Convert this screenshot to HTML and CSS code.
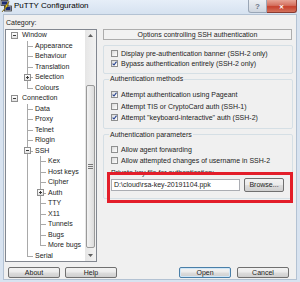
FILE: index.html
```html
<!DOCTYPE html>
<html>
<head>
<meta charset="utf-8">
<link rel="stylesheet" href="styles.css">
</head>
<body>
<div class="win">
  <div class="titlebar">
    <svg class="appicon" width="13" height="13" viewBox="0 0 13 13">
      <rect x="1" y="0.5" width="7" height="5" fill="#c4c4c4" stroke="#3a3a3a" stroke-width=".8"/>
      <rect x="2" y="1.4" width="5" height="3.2" fill="#1c2c74"/>
      <rect x="4.5" y="6" width="7" height="5" fill="#c4c4c4" stroke="#3a3a3a" stroke-width=".8"/>
      <rect x="5.5" y="6.9" width="5" height="3.2" fill="#1c2c74"/>
      <path d="M2 12 L6 6.5 L4.8 6.5 L9 1.5 L7.2 5.6 L8.4 5.6 Z" fill="#f3d31a" stroke="#6d5300" stroke-width=".5"/>
    </svg>
    <span class="title">PuTTY Configuration</span>
    <div class="caps">
      <div class="cap help">?</div>
      <div class="cap close">✕</div>
    </div>
  </div>
  <div class="client">
    <div class="main">
      <div class="left">
        <div class="cat">Category:</div>
        <div class="tree">
          <div class="items">
            <div class="row"><i class="c"><b class="exp minus"></b></i><span class="tx">Window</span></div>
            <div class="row"><i class="c"></i><i class="c t"></i><span class="tx">Appearance</span></div>
            <div class="row"><i class="c"></i><i class="c t"></i><span class="tx">Behaviour</span></div>
            <div class="row"><i class="c"></i><i class="c t"></i><span class="tx">Translation</span></div>
            <div class="row"><i class="c"></i><i class="c t"><b class="exp plus"></b></i><span class="tx">Selection</span></div>
            <div class="row"><i class="c"></i><i class="c l"></i><span class="tx">Colours</span></div>
            <div class="row"><i class="c"><b class="exp minus"></b></i><span class="tx">Connection</span></div>
            <div class="row"><i class="c"></i><i class="c t"></i><span class="tx">Data</span></div>
            <div class="row"><i class="c"></i><i class="c t"></i><span class="tx">Proxy</span></div>
            <div class="row"><i class="c"></i><i class="c t"></i><span class="tx">Telnet</span></div>
            <div class="row"><i class="c"></i><i class="c t"></i><span class="tx">Rlogin</span></div>
            <div class="row"><i class="c"></i><i class="c t"><b class="exp minus"></b></i><span class="tx">SSH</span></div>
            <div class="row"><i class="c"></i><i class="c v"></i><i class="c t"></i><span class="tx">Kex</span></div>
            <div class="row"><i class="c"></i><i class="c v"></i><i class="c t"></i><span class="tx">Host keys</span></div>
            <div class="row"><i class="c"></i><i class="c v"></i><i class="c t"></i><span class="tx">Cipher</span></div>
            <div class="row"><i class="c"></i><i class="c v"></i><i class="c t"><b class="exp plus"></b></i><span class="tx">Auth</span></div>
            <div class="row"><i class="c"></i><i class="c v"></i><i class="c t"></i><span class="tx">TTY</span></div>
            <div class="row"><i class="c"></i><i class="c v"></i><i class="c t"></i><span class="tx">X11</span></div>
            <div class="row"><i class="c"></i><i class="c v"></i><i class="c t"></i><span class="tx">Tunnels</span></div>
            <div class="row"><i class="c"></i><i class="c v"></i><i class="c t"></i><span class="tx">Bugs</span></div>
            <div class="row"><i class="c"></i><i class="c v"></i><i class="c l"></i><span class="tx">More bugs</span></div>
            <div class="row"><i class="c"></i><i class="c l"></i><span class="tx">Serial</span></div>
          </div>
          <div class="sb">
            <div class="arr"><svg width="5" height="3" viewBox="0 0 5 3"><path d="M0 3 L2.5 0 L5 3 Z" fill="#606060"/></svg></div>
            <div class="track"><div class="thumb"><div class="grip"></div></div></div>
            <div class="arr"><svg width="5" height="3" viewBox="0 0 5 3"><path d="M0 0 L2.5 3 L5 0 Z" fill="#606060"/></svg></div>
          </div>
        </div>
      </div>
      <div class="right">
        <div class="hdr">Options controlling SSH authentication</div>
        <div class="grp g1">
          <div class="chk"><span class="box"></span>Display pre-authentication banner (SSH-2 only)</div>
          <div class="chk"><span class="box"><svg width="5" height="5" viewBox="0 0 5 5"><path d="M0.6 2.6 L2 4 L4.5 0.6" fill="none" stroke="#24408e" stroke-width="1.1"/></svg></span>Bypass authentication entirely (SSH-2 only)</div>
        </div>
        <fieldset class="grp g2">
          <legend>Authentication methods</legend>
          <div class="chk tall"><span class="box"><svg width="5" height="5" viewBox="0 0 5 5"><path d="M0.6 2.6 L2 4 L4.5 0.6" fill="none" stroke="#24408e" stroke-width="1.1"/></svg></span>Attempt authentication using Pageant</div>
          <div class="chk tall"><span class="box"></span>Attempt TIS or CryptoCard auth (SSH-1)</div>
          <div class="chk tall"><span class="box"><svg width="5" height="5" viewBox="0 0 5 5"><path d="M0.6 2.6 L2 4 L4.5 0.6" fill="none" stroke="#24408e" stroke-width="1.1"/></svg></span>Attempt "keyboard-interactive" auth (SSH-2)</div>
        </fieldset>
        <fieldset class="grp g3">
          <legend>Authentication parameters</legend>
          <div class="chk tall"><span class="box"></span>Allow agent forwarding</div>
          <div class="chk tall"><span class="box"></span>Allow attempted changes of username in SSH-2</div>
          <div class="lbl">Private key file for authentication:</div>
          <div class="filerow">
            <div class="field">D:\cloud\rsa-key-20191104.ppk</div>
            <div class="btn browse">Browse...</div>
          </div>
        </fieldset>
      </div>
    </div>
    <div class="btnrow">
      <div class="btn">About</div>
      <div class="btn gap5">Help</div>
      <div class="btn def">Open</div>
      <div class="btn gap6">Cancel</div>
    </div>
  </div>
  <div class="redbox"></div>
</div>
</body>
</html>
```
FILE: styles.css
```css
html, body { margin: 0; padding: 0; }
body { background: #f0f0f0; }

.win {
  position: relative;
  width: 300px;
  height: 282px;
  overflow: hidden;
  background: #d8e3f0;
  font-family: "Liberation Sans", Arial, sans-serif;
  font-size: 7px;
  color: #1c1c1c;
  display: flex;
  flex-direction: column;
}

/* title bar */
.titlebar {
  height: 14px;
  flex: none;
  display: flex;
  align-items: flex-start;
  background: linear-gradient(#e6eef8, #d6e2f0);
}
.appicon { flex: none; margin-right: 1px; }
.title {
  font-size: 8px;
  line-height: 11px;
  color: #000;
}
.caps { margin-left: auto; margin-right: 3px; display: flex; }
.cap {
  height: 13px;
  box-sizing: border-box;
  display: flex;
  align-items: center;
  justify-content: center;
}
.help {
  width: 19px;
  border: 1px solid #9aa6b6;
  border-top: none;
  border-radius: 0 0 0 3px;
  background: linear-gradient(#eceff3, #cfd6df);
  color: #6b7788;
  font-size: 8px;
  font-weight: bold;
}
.close {
  width: 30px;
  border: 1px solid #8a3b31;
  border-top: none;
  border-left: none;
  border-radius: 0 0 3px 0;
  background: linear-gradient(#e7a496, #d4705e 45%, #c7412d 55%, #d3715b);
  color: #fff;
  font-size: 6px;
  font-weight: bold;
}

/* client area */
.client {
  flex: 1;
  margin: 0 3px 2px;
  border: 1px solid #b3c2d3;
  background: #f0f0f0;
  display: flex;
  flex-direction: column;
}
.main { display: flex; height: 247px; flex: none; }
.left { width: 92px; margin-left: 1px; }
.cat { margin: 4px 0 2px 1px; line-height: 8px; }

.tree {
  height: 233px;
  box-sizing: border-box;
  border: 1px solid #828790;
  background: #fff;
  display: flex;
}
.items { flex: 1; padding-left: 2px; }
.row { height: 10.5px; display: flex; align-items: center; }
.c {
  flex: none;
  width: 13px;
  height: 10.5px;
  display: flex;
  align-items: center;
  padding-left: 3px;
  box-sizing: border-box;
}
.t {
  background:
    linear-gradient(#a9a9a9, #a9a9a9) 6px 0 / 1px 100% no-repeat,
    linear-gradient(#a9a9a9, #a9a9a9) 6px 5px / 6px 1px no-repeat;
}
.l {
  background:
    linear-gradient(#a9a9a9, #a9a9a9) 6px 0 / 1px 6px no-repeat,
    linear-gradient(#a9a9a9, #a9a9a9) 6px 5px / 6px 1px no-repeat;
}
.v {
  background: linear-gradient(#a9a9a9, #a9a9a9) 6px 0 / 1px 100% no-repeat;
}
.exp {
  width: 7px;
  height: 7px;
  box-sizing: border-box;
  border: 1px solid #8f8f8f;
  background:
    linear-gradient(#3c3c3c, #3c3c3c) center / 3px 1px no-repeat,
    linear-gradient(#ffffff, #e2e2e2);
}
.exp.plus {
  background:
    linear-gradient(#3c3c3c, #3c3c3c) center / 3px 1px no-repeat,
    linear-gradient(#3c3c3c, #3c3c3c) center / 1px 3px no-repeat,
    linear-gradient(#ffffff, #e2e2e2);
}
.tx { margin-left: 1px; line-height: 10px; white-space: nowrap; }

/* scrollbar */
.sb {
  width: 11px;
  flex: none;
  display: flex;
  flex-direction: column;
  background: linear-gradient(90deg, #e6e6e6, #f2f2f2);
}
.arr {
  height: 11px;
  flex: none;
  display: flex;
  align-items: center;
  justify-content: center;
}
.track { flex: 1; }
.thumb {
  margin: 44px 1px 0;
  height: 163px;
  box-sizing: border-box;
  border: 1px solid #9a9a9a;
  border-radius: 2px;
  background: linear-gradient(90deg, #f3f3f3, #dcdcdc);
  display: flex;
  align-items: center;
  justify-content: center;
}
.grip {
  width: 5px;
  height: 5px;
  background: repeating-linear-gradient(#777 0 1px, transparent 1px 2px);
}

/* right panel */
.right {
  width: 190px;
  margin-left: 6px;
  padding-top: 14px;
  display: flex;
  flex-direction: column;
}
.hdr {
  height: 11px;
  margin-right: 1px;
  box-sizing: border-box;
  border: 1px solid #adadad;
  background: #f2f2f2;
  text-align: center;
  line-height: 9px;
}
.grp {
  margin: 0;
  border: 1px solid #d5dfe5;
  border-radius: 2px;
  min-width: 0;
}
.g1 { margin-top: 5px; padding: 2px 0 4px 7px; }
.g2 { margin-top: 1px; padding: 6px 0 4px 7px; }
.g3 { margin-top: 2px; padding: 4.75px 0 6px 7px; }
legend {
  padding: 0 1px;
  margin-left: -2px;
  line-height: 8px;
  font-size: 7px;
}
.chk {
  height: 10.5px;
  display: flex;
  align-items: center;
  white-space: nowrap;
}
.chk.tall { height: 11.5px; }
.box {
  flex: none;
  width: 7px;
  height: 7px;
  box-sizing: border-box;
  margin-right: 3px;
  border: 1px solid #8e8f8f;
  background: linear-gradient(135deg, #dadada, #ffffff);
  display: flex;
  align-items: center;
  justify-content: center;
}
.lbl { margin-top: 3px; line-height: 8px; }
.filerow { margin-top: 0.75px; display: flex; align-items: center; height: 14px; }
.field {
  width: 129px;
  height: 12px;
  box-sizing: border-box;
  border: 1px solid #abadb3;
  background: #fff;
  padding-left: 2px;
  line-height: 10px;
  white-space: nowrap;
}

/* buttons */
.btn {
  width: 52px;
  height: 11px;
  box-sizing: border-box;
  border: 1px solid #707070;
  border-radius: 2px;
  background: linear-gradient(#f2f2f2 0%, #ebebeb 48%, #dddddd 52%, #cfcfcf 100%);
  text-align: center;
  line-height: 9px;
  flex: none;
}
.browse { width: 40px; height: 14px; line-height: 12px; margin-left: 4px; }
.btnrow {
  margin-top: 5px;
  height: 11px;
  display: flex;
  padding: 0 7px 0 4px;
}
.gap5 { margin-left: 5px; }
.gap6 { margin-left: 6px; }
.def {
  margin-left: auto;
  border-color: #4a7fa8;
  box-shadow: inset 0 0 0 1px #cfe6f7;
}

/* annotation overlay */
.redbox {
  position: absolute;
  left: 107px;
  top: 172px;
  width: 186px;
  height: 31px;
  box-sizing: border-box;
  border: 3px solid #e31e2a;
}
```
